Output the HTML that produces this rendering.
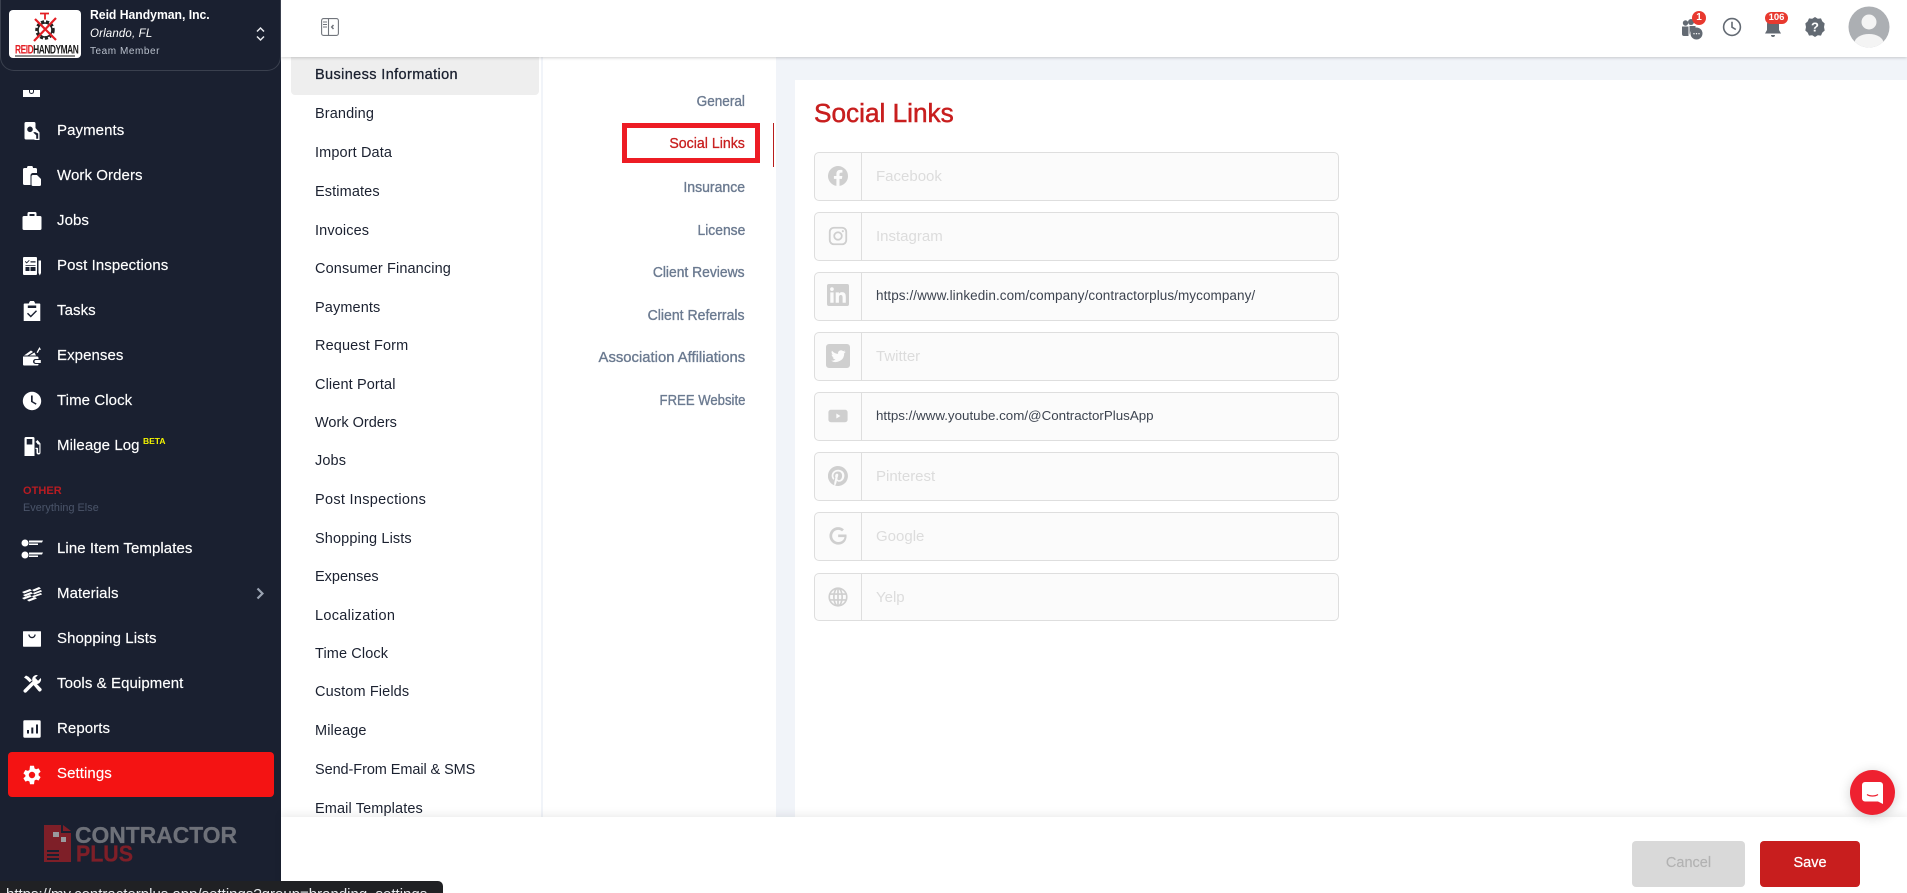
<!DOCTYPE html>
<html lang="en"><head><meta charset="utf-8"><title>Social Links</title>
<style>
*{box-sizing:border-box}
html,body{margin:0;padding:0;width:1907px;height:893px;overflow:hidden;background:#fff;font-family:"Liberation Sans",Arial,sans-serif}
.a{position:absolute;white-space:nowrap}
.s{position:absolute;left:57px;color:#fff;font-size:15px;line-height:20px;white-space:nowrap;-webkit-text-stroke:.15px #fff;letter-spacing:.08px}
.i{position:absolute;left:22px;width:20px;height:20px;fill:#fff}
.l{position:absolute;left:315px;color:#1b2130;font-size:14.5px;line-height:20px;white-space:nowrap;letter-spacing:.12px;margin-top:1px}
.m{position:absolute;right:1162px;color:#6b7a90;font-size:14.6px;line-height:20px;white-space:nowrap;-webkit-text-stroke:.35px #6b7a90;margin-top:1px;transform-origin:100% 50%}
.f{position:absolute;left:814px;width:525px;height:49px;background:#fbfbfb;border:1px solid #dedede;border-radius:5px}
.f:before{content:"";position:absolute;left:46px;top:0;bottom:0;width:1px;background:#dedede}
.f svg{position:absolute;left:13px;top:13px;width:20px;height:20px;fill:#cfcfcf}
.f span{position:absolute;left:61px;top:13.5px;line-height:20px;font-size:15px;color:#dcdcdc;white-space:nowrap}
.f span.v{font-size:13.5px;color:#3d4450;top:13px}
</style></head><body>
<!-- backgrounds -->
<div class="a" style="left:776px;top:57px;width:1131px;height:760px;background:#f1f4f9"></div>
<div class="a" style="left:795px;top:80px;width:1112px;height:737px;background:#fff"></div>
<div class="a" style="left:541px;top:57px;width:2px;height:760px;background:#f1f4f9"></div>
<div class="a" style="left:291px;top:57px;width:248px;height:38px;background:#eee;border-radius:0 0 4px 4px"></div>

<!-- settings list -->
<div class="l" style="top:64px;-webkit-text-stroke:.3px #1b2130;letter-spacing:.38px">Business Information</div>
<div class="l" style="top:103px">Branding</div>
<div class="l" style="top:142px">Import Data</div>
<div class="l" style="top:181px">Estimates</div>
<div class="l" style="top:219.5px">Invoices</div>
<div class="l" style="top:258px">Consumer Financing</div>
<div class="l" style="top:296.5px">Payments</div>
<div class="l" style="top:335px">Request Form</div>
<div class="l" style="top:373.5px">Client Portal</div>
<div class="l" style="top:411.5px;letter-spacing:0">Work Orders</div>
<div class="l" style="top:450px">Jobs</div>
<div class="l" style="top:489px;letter-spacing:.3px">Post Inspections</div>
<div class="l" style="top:527.5px">Shopping Lists</div>
<div class="l" style="top:566px;letter-spacing:0">Expenses</div>
<div class="l" style="top:604.5px;letter-spacing:.3px">Localization</div>
<div class="l" style="top:643px">Time Clock</div>
<div class="l" style="top:681px">Custom Fields</div>
<div class="l" style="top:720px">Mileage</div>
<div class="l" style="top:759px;letter-spacing:-.08px">Send-From Email &amp; SMS</div>
<div class="l" style="top:797.5px">Email Templates</div>

<!-- middle nav -->
<div class="m" style="top:91px;transform:scaleX(.93)">General</div>
<div class="m" style="top:133px;color:#c81e1e;-webkit-text-stroke:.3px #c81e1e;transform:scaleX(.97)">Social Links</div>
<div class="m" style="top:176.5px;transform:scaleX(.963)">Insurance</div>
<div class="m" style="top:219.5px;transform:scaleX(.95)">License</div>
<div class="m" style="top:262px;transform:scaleX(.95)">Client Reviews</div>
<div class="m" style="top:304.5px;transform:scaleX(.964)">Client Referrals</div>
<div class="m" style="top:346.5px;transform:scaleX(1.017)">Association Affiliations</div>
<div class="m" style="top:390px;transform:scaleX(.9)">FREE Website</div>
<div class="a" style="left:622px;top:123px;width:138px;height:40px;border:5px solid #ed1c24"></div>
<div class="a" style="left:773px;top:123px;width:1px;height:44px;background:#b81c1c"></div>

<!-- content -->
<div class="a" style="left:814px;top:96px;font-size:26.2px;line-height:34px;color:#c81e1e;-webkit-text-stroke:.5px #c81e1e">Social Links</div>

<div class="f" style="top:152px"><svg viewBox="0 0 24 24"><path d="M24 12a12 12 0 1 0-13.9 11.900v-8.400H7.100V12h3V9.400c0-3 1.800-4.700 4.500-4.700 1.300 0 2.700.2 2.700.2v3h-1.500c-1.500 0-2 .9-2 1.900V12h3.400l-.5 3.500h-2.900v8.400A12 12 0 0 0 24 12z"/></svg><span>Facebook</span></div>
<div class="f" style="top:212px"><svg viewBox="0 0 24 24"><path d="M7 1h10a6 6 0 0 1 6 6v10a6 6 0 0 1-6 6H7a6 6 0 0 1-6-6V7a6 6 0 0 1 6-6zm0 2.200A3.800 3.800 0 0 0 3.200 7v10A3.800 3.800 0 0 0 7 20.800h10a3.800 3.800 0 0 0 3.800-3.800V7A3.800 3.800 0 0 0 17 3.200H7zm5 3.200a5.600 5.600 0 1 1 0 11.200 5.600 5.600 0 0 1 0-11.200zm0 2.100a3.500 3.500 0 1 0 0 7 3.500 3.500 0 0 0 0-7zm5.800-3.600a1.300 1.300 0 1 1 0 2.600 1.300 1.300 0 0 1 0-2.600z"/></svg><span>Instagram</span></div>
<div class="f" style="top:272px"><svg style="left:12px;top:11px;width:22px;height:22px" viewBox="0 0 24 24"><path fill-rule="evenodd" d="M2 0h20a2 2 0 0 1 2 2v20a2 2 0 0 1-2 2H2a2 2 0 0 1-2-2V2a2 2 0 0 1 2-2zm1.600 9.200V20.500H7.200V9.200H3.600zM5.400 3.600a2 2 0 1 0 0 4 2 2 0 0 0 0-4zM9.500 9.200V20.500H13v-5.600c0-1.500.3-2.900 2.100-2.900s1.900 1.700 1.900 3v5.500h3.500v-6.200c0-3-.7-5.400-4.200-5.400-1.700 0-2.800.9-3.200 1.800h-.1V9.200H9.500z"/></svg><span class="v" style="letter-spacing:.07px">https://www.linkedin.com/company/contractorplus/mycompany/</span></div>
<div class="f" style="top:332px"><svg style="left:11px;top:11px;width:24px;height:24px" viewBox="0 0 24 24"><path fill-rule="evenodd" d="M3 0h18a3 3 0 0 1 3 3v18a3 3 0 0 1-3 3H3a3 3 0 0 1-3-3V3a3 3 0 0 1 3-3zm16.500 7.700c-.5.200-1.100.4-1.700.5.600-.4 1.100-1 1.300-1.700-.6.300-1.200.6-1.900.7a3 3 0 0 0-5.100 2.700 8.500 8.500 0 0 1-6.100-3.100 3 3 0 0 0 .9 4c-.5 0-.9-.1-1.300-.4 0 1.500 1 2.700 2.400 3-.4.100-.9.100-1.300 0 .4 1.200 1.500 2 2.800 2.100a6 6 0 0 1-4.400 1.200 8.500 8.500 0 0 0 13.100-7.500c.6-.4 1.100-.9 1.500-1.500z"/></svg><span>Twitter</span></div>
<div class="f" style="top:392px"><svg viewBox="0 0 24 24"><path fill-rule="evenodd" d="M3.500 4.500h17A3 3 0 0 1 23.500 7.500v9a3 3 0 0 1-3 3h-17a3 3 0 0 1-3-3v-9a3 3 0 0 1 3-3zM10 9v6l5-3-5-3z"/></svg><span class="v" style="font-size:13.35px">https://www.youtube.com/@ContractorPlusApp</span></div>
<div class="f" style="top:452px"><svg viewBox="0 0 24 24"><path d="M12 0a12 12 0 0 0-4.400 23.200c-.1-.9-.2-2.400 0-3.400l1.400-6s-.4-.7-.4-1.800c0-1.700 1-2.900 2.200-2.900 1 0 1.500.8 1.500 1.700 0 1-.7 2.600-1 4-.3 1.200.6 2.200 1.800 2.200 2.100 0 3.800-2.300 3.800-5.500 0-2.900-2.100-4.900-5-4.900-3.400 0-5.400 2.600-5.400 5.200 0 1 .4 2.100.9 2.700.1.100.1.200.1.300l-.3 1.400c-.1.200-.2.300-.4.200-1.500-.7-2.400-2.900-2.400-4.600 0-3.800 2.800-7.300 7.900-7.300 4.200 0 7.400 3 7.400 6.900 0 4.100-2.600 7.500-6.200 7.500-1.200 0-2.400-.6-2.800-1.400l-.7 2.900c-.3 1-1 2.300-1.500 3.100A12 12 0 1 0 12 0z"/></svg><span>Pinterest</span></div>
<div class="f" style="top:512px"><svg viewBox="0 0 24 24"><path d="M12.200 10.200v3.100h7.600c-.5 3-3 5.900-7.600 5.900-4 0-7.200-3.300-7.200-7.300s3.200-7.300 7.200-7.300c2.300 0 3.800 1 4.600 1.800l2.300-2.300C17.400 2.500 15 1.400 12.200 1.400 6.400 1.400 1.700 6.100 1.700 11.900s4.700 10.500 10.500 10.500c6.200 0 10.100-4.300 10.100-10.400 0-.6-.1-1.300-.2-1.800H12.200z"/></svg><span>Google</span></div>
<div class="f" style="top:573px;height:48px"><svg viewBox="0 0 24 24" style="fill:none;stroke:#cfcfcf;stroke-width:2"><circle cx="12" cy="12" r="10.500"/><ellipse cx="12" cy="12" rx="5" ry="10.500"/><path d="M2 8.500h20M2 15.500h20M12 1.500v21"/></svg><span>Yelp</span></div>

<!-- top header -->
<div class="a" style="left:281px;top:0;width:1626px;height:57px;background:#fff;box-shadow:0 1px 3px rgba(0,0,0,.18)"></div>
<svg class="a" style="left:321px;top:18px;width:18px;height:18px" viewBox="0 0 18 18" fill="none" stroke="#71757c" stroke-width="1.100"><rect x=".6" y=".6" width="16.800" height="16.800" rx="2"/><path d="M7.500 .6v16.800M2 4h4M2 6.500h4M2 9h4"/><path d="M12.500 7l-1.800 2 1.800 2" stroke-width="1.500"/></svg>

<!-- header icons -->
<svg class="a" style="left:1681px;top:16px;width:24px;height:24px" viewBox="0 0 24 24" fill="#636a73"><circle cx="4.500" cy="7" r="2.700"/><circle cx="10" cy="6" r="3"/><path d="M1 10.500h6.500v9.500H3a2 2 0 0 1-2-2zM8.500 10h6v2.500a7 7 0 0 0-6 6.500z"/><circle cx="15.500" cy="17.500" r="6" /><circle cx="13" cy="17.700" r=".7" fill="#fff"/><circle cx="15.500" cy="17.700" r=".7" fill="#fff"/><circle cx="18" cy="17.700" r=".7" fill="#fff"/></svg>
<div class="a" style="left:1692px;top:10.500px;width:14px;height:14px;border-radius:50%;background:#e8392f;color:#fff;font-size:10px;font-weight:bold;line-height:14px;text-align:center">1</div>
<svg class="a" style="left:1722px;top:17px;width:20px;height:20px" viewBox="0 0 20 20" fill="none" stroke="#636a73" stroke-width="1.600"><circle cx="10" cy="10" r="8.400"/><path d="M10 4.800v5.400l3.800 2.300"/></svg>
<svg class="a" style="left:1764px;top:17px;width:18px;height:22px" viewBox="0 0 18 22" fill="#636a73"><path d="M9 0c.9 0 1.500.6 1.500 1.400C13.500 2 15 4.400 15 7.500V13l2 3.500H1L3 13V7.500C3 4.400 4.500 2 7.500 1.400 7.500.6 8.100 0 9 0z"/><path d="M7 18h4a2 2 0 0 1-4 0z"/></svg>
<div class="a" style="left:1765px;top:12px;width:23px;height:12px;border-radius:6px;background:#e8392f;color:#fff;font-size:9.500px;font-weight:bold;line-height:12px;text-align:center">106</div>
<svg class="a" style="left:1805px;top:17px;width:20px;height:20px" viewBox="0 0 20 20"><path fill="#636a73" d="M10 0l2.800 1.700 3.200-.3 1.300 3 2.400 2.100-.7 3.500.7 3.500-2.400 2.100-1.300 3-3.200-.3L10 20l-2.800-1.700-3.200.3-1.300-3L.3 13.500 1 10 .3 6.500l2.400-2.100 1.300-3 3.200.3z"/><text x="10" y="14.500" font-family="Liberation Sans" font-size="13" font-weight="bold" fill="#fff" text-anchor="middle">?</text></svg>
<svg class="a" style="left:1848px;top:6px;width:42px;height:42px" viewBox="0 0 42 42"><defs><clipPath id="c"><circle cx="21" cy="21" r="20.500"/></clipPath></defs><circle cx="21" cy="21" r="20.500" fill="#acafb3"/><g clip-path="url(#c)" fill="#f4f4f4"><circle cx="21" cy="16" r="7.500"/><ellipse cx="21" cy="37" rx="14.500" ry="9"/></g></svg>

<!-- sidebar -->
<div class="a" style="left:0;top:0;width:281px;height:893px;background:#1a2030"></div>
<div class="a" style="left:0;top:-10px;width:281px;height:81px;border:1px solid #3a404e;border-top:0;border-radius:0 0 14px 14px"></div>
<div class="a" style="left:9px;top:10px;width:72px;height:48px;background:#fff;border-radius:4px;overflow:hidden">
<svg width="72" height="48" viewBox="0 0 72 48"><g fill="none"><circle cx="36" cy="20" r="8" stroke="#222" stroke-width="3.500" stroke-dasharray="3 1.800"/><circle cx="36" cy="20" r="7" stroke="#222" stroke-width="1.500"/><path d="M26 9l21 21M47 8L25 31" stroke="#e31e24" stroke-width="2.200"/><path d="M31 3.500h9M36 3.500v6" stroke="#e31e24" stroke-width="1.800"/></g></svg>
<div class="a" style="left:6px;top:35px;font-size:11px;font-weight:bold;line-height:10px;letter-spacing:-.6px;transform-origin:0 0;transform:scaleX(.76) scaleY(1.05)"><span style="color:#e31e24">REID</span><span style="color:#1a1a1a">HANDYMAN</span></div>
<div class="a" style="left:6px;top:45px;width:60px;height:1.500px;background:#8a8a8a"></div></div>
<div class="a" style="left:90px;top:7px;color:#fff;font-size:13px;line-height:16px;font-weight:bold;letter-spacing:-.03px;transform-origin:0 0;transform:scaleX(.94)">Reid Handyman, Inc.</div>
<div class="a" style="left:90px;top:26px;color:#fff;font-size:11.500px;line-height:16px;font-style:italic;letter-spacing:.15px">Orlando, FL</div>
<div class="a" style="left:90px;top:44px;color:#b9c0cc;font-size:10px;line-height:16px;letter-spacing:.55px">Team Member</div>
<svg class="a" style="left:255px;top:26px;width:11px;height:16px" viewBox="0 0 11 16" fill="none" stroke="#e8eaee" stroke-width="1.500"><path d="M2 5.500l3.500-3.500L9 5.500M2 10.500L5.500 14 9 10.500"/></svg>

<div class="a" style="left:23px;top:90px;width:17px;height:7px;background:#fff"><div style="position:absolute;left:6px;top:0;width:5px;height:4px;border:1.500px solid #1a2030;border-top:0;border-radius:0 0 3px 3px"></div></div>

<!-- Payments -->
<svg class="i" style="top:121px" viewBox="0 0 20 20"><path fill-rule="evenodd" d="M4 1h8a1.500 1.500 0 0 1 1.500 1.500V7l4 4.500V19h-5v-.5H4A1.500 1.500 0 0 1 2.500 17V2.500A1.500 1.500 0 0 1 4 1zm4 4.500a2.800 2.800 0 1 0 0 5.600 2.800 2.800 0 0 0 0-5.600zm5 5.500l3.200 1.500v5.200h-2v-3.500l-3-2.700z"/></svg>
<div class="s" style="top:121px">Payments</div>
<!-- Work Orders -->
<svg class="i" style="top:166px" viewBox="0 0 20 20"><path d="M1 3.500A1.500 1.500 0 0 1 2.500 2H5a3 3 0 0 1 6 0h2.500A1.500 1.500 0 0 1 15 3.500V7h-4a2.500 2.500 0 0 0-2.500 2.500V19h-6A1.500 1.500 0 0 1 1 17.500z"/><path d="M11 9h4l4 4v5.500a1.500 1.500 0 0 1-1.500 1.500H11a1.500 1.500 0 0 1-1.500-1.500v-8A1.500 1.500 0 0 1 11 9z"/></svg>
<div class="s" style="top:166px">Work Orders</div>
<!-- Jobs -->
<svg class="i" style="top:211px" viewBox="0 0 20 20"><path fill-rule="evenodd" d="M7 1h6a1.500 1.500 0 0 1 1.500 1.500V5H18a1.500 1.500 0 0 1 1.500 1.500v11A1.500 1.500 0 0 1 18 19H2A1.500 1.500 0 0 1 .5 17.500v-11A1.500 1.500 0 0 1 2 5h3.500V2.500A1.500 1.500 0 0 1 7 1zm.5 2v2h5V3z"/></svg>
<div class="s" style="top:211px">Jobs</div>
<!-- Post Inspections -->
<svg class="i" style="top:256px" viewBox="0 0 20 20"><path fill-rule="evenodd" d="M2 1h12a1 1 0 0 1 1 1v16a1 1 0 0 1-1 1H2a1 1 0 0 1-1-1V2a1 1 0 0 1 1-1zm1.500 4l1.200 1.200L7 4l.6.600-2.900 2.900L2.900 5.700zm5 .200h5v1.300h-5zM3.500 11h4v4h-4zm5 0h5v4h-5zM3.500 9h10v.8h-10z"/><path d="M16.500 4.500h2.500V17l-1.200 2.500L16.500 17z"/></svg>
<div class="s" style="top:256px">Post Inspections</div>
<!-- Tasks -->
<svg class="i" style="top:301px" viewBox="0 0 20 20"><path fill-rule="evenodd" d="M7 2.500a3 3 0 0 1 6 0h4.500a.8.800 0 0 1 .8.800V20H1.700V3.300a.8.800 0 0 1 .8-.8zM5.800 4.500V7h8.400V4.500zM14 9.200l-5.200 5.300-2.800-2.800-1 1 3.800 3.800 6.200-6.300z"/></svg>
<div class="s" style="top:300.500px">Tasks</div>
<!-- Expenses -->
<svg class="i" style="top:346px" viewBox="0 0 20 20"><path fill-rule="evenodd" d="M1 10.500h14a1.500 1.500 0 0 1 1.500 1.500v1h-3a2.500 2.500 0 0 0 0 5h3V18.500a1 1 0 0 1-1 1H2a1 1 0 0 1-1-1zM14 14h4.800v3H14a1.500 1.500 0 0 1 0-3zM2 9.500L9 4.500l2 1.500L5.500 9.500zM7.500 9.500l5-3 1.500 3zM14.500 6.500L17.500 1l1.500 2.800h-1.500L15.800 7z"/></svg>
<div class="s" style="top:345.500px">Expenses</div>
<!-- Time Clock -->
<svg class="i" style="top:391px" viewBox="0 0 20 20"><path fill-rule="evenodd" d="M10 .8a9.200 9.200 0 1 1 0 18.400A9.200 9.200 0 0 1 10 .8zM9 4.500v6.400l4.800 2.900.8-1.300L10.700 10.200V4.500z"/></svg>
<div class="s" style="top:390.500px">Time Clock</div>
<!-- Mileage Log -->
<svg class="i" style="top:436px" viewBox="0 0 20 20"><path fill-rule="evenodd" d="M4 1h7a1.500 1.500 0 0 1 1.500 1.500V20h-10V2.500A1.500 1.500 0 0 1 4 1zm.700 2v5.500h5.600V3z"/><path d="M13.500 6l2-2 3 3.500v9a2 2 0 0 1-4 0V13h-1v-1.200h1.800a.8.800 0 0 1 .8.800v3.900a.7.700 0 0 0 1.300 0V8.500h-1.200a1.500 1.500 0 0 1-1.200-1.500z" /></svg>
<div class="s" style="top:435.500px">Mileage Log</div>
<div class="a" style="left:143px;top:435px;color:#f5f500;font-size:8.500px;font-weight:bold;line-height:12px">BETA</div>

<div class="a" style="left:23px;top:484px;color:#b81c22;font-size:11px;font-weight:bold;line-height:14px;letter-spacing:.05px">OTHER</div>
<div class="a" style="left:23px;top:501px;color:#4b556a;font-size:10.800px;line-height:14px;letter-spacing:.05px">Everything Else</div>

<!-- Line Item -->
<svg class="a" style="left:21px;top:539px;width:23px;height:20px;fill:#fff" viewBox="0 0 23 20"><circle cx="4" cy="4" r="3.500"/><circle cx="4" cy="16" r="3.500"/><path d="M8 1.500h14l-1 2H8zM8 4.500h9v1.500H8zM8 13.500h14l-1 2H8zM8 16.500h9V18H8z"/></svg>
<div class="s" style="top:539px">Line Item Templates</div>
<!-- Materials -->
<svg class="a" style="left:21px;top:585px;width:22px;height:18px;fill:#fff" viewBox="0 0 22 18"><path d="M1 7l8-3 2 1.500-8 3zM11 5l7-3 2 1.500-7 3zM2 10l8-3 2 1.500-8 3zM12 8l8-3 1 1.500-8 3zM1 13l8-3 2 1.500-8 3zM11 11l9-3 1 1.500-9 3zM6 15l8-3 2 1.500-8 3z"/></svg>
<div class="s" style="top:583.500px">Materials</div>
<svg class="a" style="left:256px;top:587px;width:8px;height:13px" viewBox="0 0 8 13" fill="none" stroke="#9aa3b2" stroke-width="2.200"><path d="M1.500 1.500l5 5-5 5"/></svg>
<!-- Shopping Lists -->
<svg class="i" style="top:629px" viewBox="0 0 20 20"><path fill-rule="evenodd" d="M1.500 2.200h17a.5.500 0 0 1 .5.500V17a.8.800 0 0 1-.8.800H1.800A.8.800 0 0 1 1 17V2.700a.5.500 0 0 1 .5-.5zM6.300 5.500a3.700 3.700 0 0 0 7.400 0h-1.300a2.400 2.400 0 0 1-4.800 0z"/></svg>
<div class="s" style="top:629px">Shopping Lists</div>
<!-- Tools -->
<svg class="i" style="top:674px" viewBox="0 0 20 20"><path d="M14.500 1a4.500 4.500 0 0 1 1.400.2l-2.700 2.700 2.900 2.900L18.800 4a4.500 4.500 0 0 1-5.900 5.700L4.300 18.400a1.800 1.800 0 0 1-2.500-2.500l8.700-8.700A4.500 4.500 0 0 1 14.500 1zM2 3.500L4 1.500l2.500 1.200 3.500 3.500L7.700 8.400 4.200 5zM11.500 11l2.200-2.200 5.300 5.500a1.800 1.800 0 0 1-2.500 2.700z"/></svg>
<div class="s" style="top:674px">Tools &amp; Equipment</div>
<!-- Reports -->
<svg class="i" style="top:719px" viewBox="0 0 20 20"><path fill-rule="evenodd" d="M2.500 1.300h15a1.200 1.200 0 0 1 1.200 1.200v15a1.200 1.200 0 0 1-1.200 1.200h-15a1.200 1.200 0 0 1-1.200-1.200v-15a1.200 1.200 0 0 1 1.200-1.200zM14 5.500v9h2v-9zM9.300 8.500v6h2v-6zM5 11v3.500h2V11z"/></svg>
<div class="s" style="top:719px">Reports</div>
<!-- Settings -->
<div class="a" style="left:8px;top:752px;width:266px;height:45px;background:#f41313;border-radius:4px"></div>
<svg class="i" style="top:764.500px" viewBox="0 0 20 20"><path fill-rule="evenodd" d="M8 .8h4l.5 2.600 1.600.9 2.500-.9 2 3.400-2 1.700v1.900l2 1.700-2 3.400-2.500-.9-1.600.9L12 19.200H8l-.5-2.600-1.600-.9-2.500.9-2-3.400 2-1.700V10.100l-2-1.700 2-3.400 2.500.9 1.600-.9zM10 6.800a3.200 3.200 0 1 0 0 6.400 3.200 3.200 0 0 0 0-6.400z"/></svg>
<div class="s" style="top:764px">Settings</div>

<!-- contractor plus logo -->
<svg class="a" style="left:44px;top:825px;width:194px;height:38px" viewBox="0 0 194 38"><path fill="#7e1f28" d="M0 0h17v8h10v29H0zM19 0l8 6h-8z"/><rect x="9" y="7" width="6" height="5" fill="#9a9a9e"/><rect x="17" y="12" width="5" height="5" fill="#9a9a9e"/><path fill="#1a2030" d="M3 25h12v2H3zM3 29h12v2H3zM3 33h12v2H3z"/><text x="31" y="18" font-family="Liberation Sans" font-weight="bold" font-size="23" fill="#6e7179" stroke="#6e7179" stroke-width=".3" textLength="162" lengthAdjust="spacingAndGlyphs">CONTRACTOR</text><text x="32" y="36.500" font-family="Liberation Sans" font-weight="bold" font-size="23" fill="#7e1f28" stroke="#7e1f28" stroke-width=".3" textLength="57" lengthAdjust="spacingAndGlyphs">PLUS</text></svg>

<!-- footer -->
<div class="a" style="left:281px;top:817px;width:1626px;height:76px;background:#fff;box-shadow:0 -3px 8px rgba(0,0,0,.07)"></div>
<div class="a" style="left:1632px;top:841px;width:113px;height:46px;background:#d9d9d9;border-radius:4px;color:#b2b2b2;font-size:14.500px;line-height:44px;text-align:center;-webkit-text-stroke:.15px #b2b2b2">Cancel</div>
<div class="a" style="left:1760px;top:841px;width:100px;height:46px;background:#c81e1e;border-radius:4px;color:#fff;font-size:14.500px;line-height:44px;text-align:center;-webkit-text-stroke:.25px #fff">Save</div>

<!-- chat -->
<div class="a" style="left:1849.500px;top:770px;width:45px;height:45px;border-radius:50%;background:#ee2130;box-shadow:0 2px 12px rgba(0,0,0,.18)"></div>
<svg class="a" style="left:1862px;top:782px;width:21px;height:22px" viewBox="0 0 21 22"><path fill="#fff" d="M3 0h15a3 3 0 0 1 3 3v19l-5-2.500H3a3 3 0 0 1-3-3V3a3 3 0 0 1 3-3z"/><path d="M5 12.500c3 2 8 2 11 0" fill="none" stroke="#ee2130" stroke-width="1.200"/></svg>

<!-- status tooltip -->
<div class="a" style="left:0;top:881px;width:443px;height:12px;background:#202124;border-radius:0 5px 0 0;overflow:hidden;color:#e8eaed;font-size:15px;line-height:18px;padding:5px 0 0 6px">https://my.contractorplus.app/settings?group=branding_settings</div>
</body></html>
